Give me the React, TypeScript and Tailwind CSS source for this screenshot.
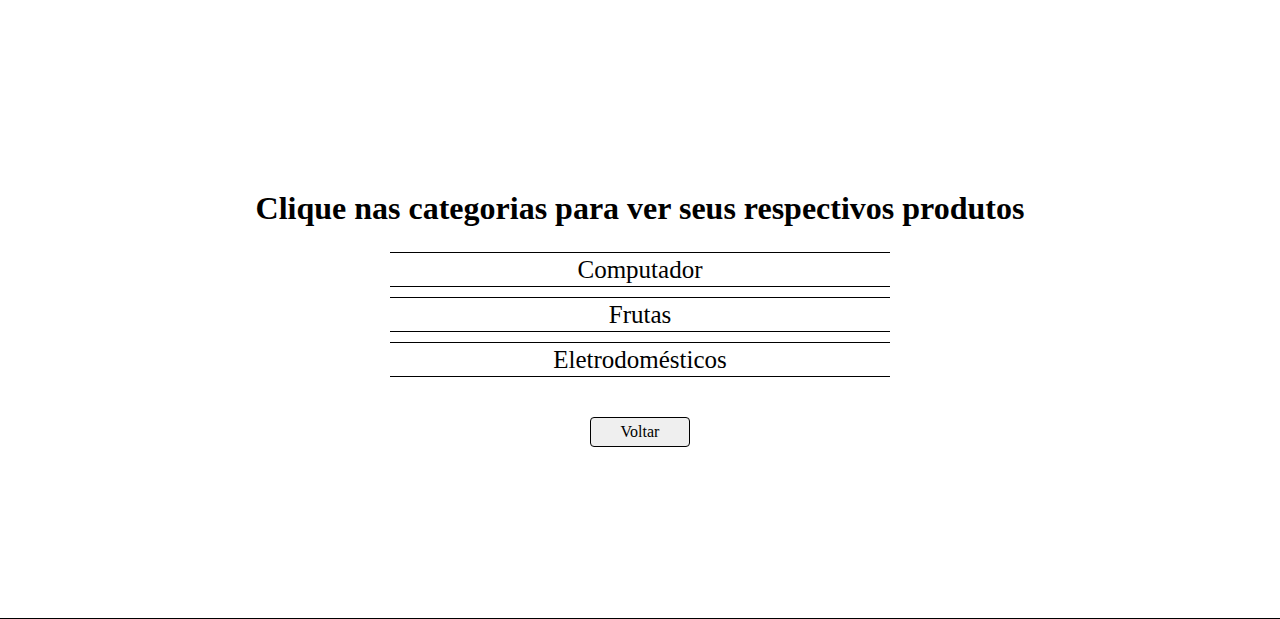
export default function App() {
  const cats = ["Computador", "Frutas", "Eletrodomésticos"];
  return (
    <div className="h-[619px] w-full flex flex-col bg-white text-black" style={{ fontFamily: '"Liberation Serif", "Times New Roman", serif' }}>
      <div className="flex-1 flex flex-col items-center pt-[190px]">
        <h1 className="text-[32px] font-bold leading-[37px]">Clique nas categorias para ver seus respectivos produtos</h1>
        <ul className="mt-[25px] w-[500px] flex flex-col gap-[10px]">
          {cats.map((c) => (
            <li key={c} className="h-[35px] border-y border-black flex items-center justify-center text-[25px] leading-[28px]">
              {c}
            </li>
          ))}
        </ul>
        <button className="mt-[40px] w-[100px] h-[30px] bg-[#efefef] border border-black rounded-[4px] text-[16px] leading-none flex items-center justify-center">
          Voltar
        </button>
      </div>
      <div className="h-px bg-black" />
    </div>
  );
}
